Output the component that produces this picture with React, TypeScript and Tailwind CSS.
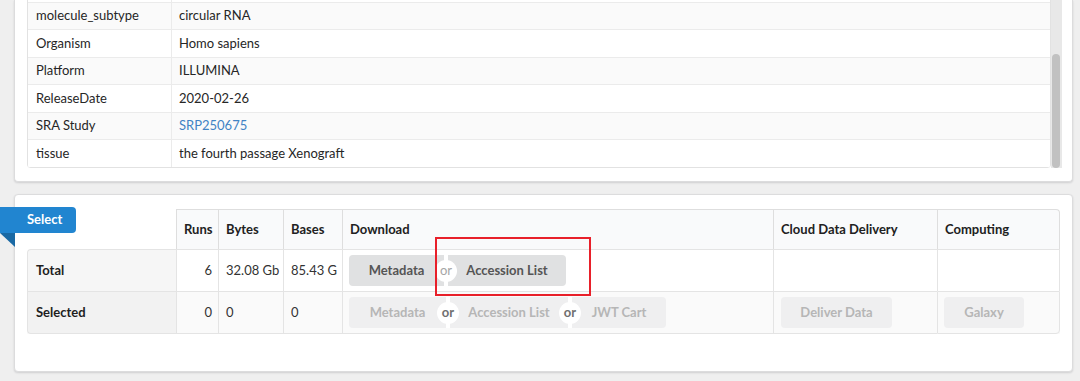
import React from 'react'

const FONT = "font-['Lato','Noto_Sans',sans-serif]"

const ATTRS: Array<{ label: string; value: string; link?: boolean }> = [
  { label: '', value: '' },
  { label: 'molecule_subtype', value: 'circular RNA' },
  { label: 'Organism', value: 'Homo sapiens' },
  { label: 'Platform', value: 'ILLUMINA' },
  { label: 'ReleaseDate', value: '2020-02-26' },
  { label: 'SRA Study', value: 'SRP250675', link: true },
  { label: 'tissue', value: 'the fourth passage Xenograft' },
]

const ROW_H = ['h-[28px]', 'h-[27px]', 'h-[28px]', 'h-[27px]', 'h-[28px]', 'h-[27px]', 'h-[28px]']

function Or({ strong }: { strong?: boolean }) {
  return (
    <div className="relative w-[4px] self-stretch bg-white z-10">
      <div
        className={`absolute left-1/2 top-1/2 -translate-x-1/2 -translate-y-1/2 w-[22px] h-[22px] rounded-full bg-white flex items-center justify-center text-[13px] leading-none ${
          strong ? 'text-[#707070] font-bold' : 'text-[#a5a5a5]'
        }`}
      >
        or
      </div>
    </div>
  )
}

function Btn({ label, w, disabled, rounded }: { label: string; w: string; disabled?: boolean; rounded: string }) {
  return (
    <div
      className={`${w} ${rounded} h-[31px] flex items-center justify-center text-[13px] font-bold ${
        disabled ? 'bg-[#efeff0] text-[#b6b6b6]' : 'bg-[#e0e1e2] text-[#555]'
      }`}
    >
      {label}
    </div>
  )
}

function AttributesCard() {
  return (
    <div className="ml-[14px] mr-[7px] bg-white border-x border-b border-[#dcdcdd] rounded-b-[4px] shadow-[0_1px_2px_0_rgba(34,36,38,0.15)] pl-[12px] pr-[10px] pb-[13px]">
      <div className="flex h-[168px]">
        <div className="flex-1 h-[168px] overflow-hidden">
          <div className="-mt-[25px] border-x border-[#e2e2e2] rounded-b-[4px] overflow-hidden">
            {ATTRS.map((a, i) => (
              <div
                key={i}
                className={`${ROW_H[i]} flex border-b border-[#ebebeb] ${i % 2 === 1 ? 'bg-[#fafafa]' : 'bg-white'} ${
                  i === ATTRS.length - 1 ? 'border-b-[#e2e2e2]' : ''
                }`}
              >
                <div className="w-[143px] flex items-center pl-[8px] text-[13px] text-[#262626]">{a.label}</div>
                <div
                  className={`flex-1 flex items-center pl-[7px] border-l border-[#ebebeb] text-[13px] ${
                    a.link ? 'text-[#4183c4]' : 'text-[#262626]'
                  }`}
                >
                  {a.value}
                </div>
              </div>
            ))}
          </div>
        </div>
        <div className="w-[11px] bg-[#e8e8e8] pt-[54px] px-[1px]">
          <div className="h-[114px] w-[8px] rounded-[4px] bg-[#c1c1c1]" />
        </div>
      </div>
    </div>
  )
}

const HEAD = 'border-l border-t border-[#dedede] bg-[#f9fafb] flex items-center pl-[7px] text-[13px] font-bold text-[#212121]'
const CELL = 'border-l border-t border-[#e4e4e4] flex items-center'

function SelectCard() {
  return (
    <div className="relative mt-[12px] ml-[14px] mr-[7px] h-[178px] bg-white border border-[#dcdcdd] rounded-[4px] shadow-[0_1px_2px_0_rgba(34,36,38,0.15)] pt-[14px] px-[12px]">
      <div className="absolute -left-[15px] top-[12px]">
        <div className="w-[76px] h-[26px] bg-[#2185d0] rounded-r-[4px] flex items-center pl-[27px] text-[13px] font-bold text-white">
          Select
        </div>
        <div className="w-0 h-0 border-t-[14px] border-t-[#1a69a4] border-l-[15px] border-l-transparent" />
      </div>

      <div className="flex h-[40px]">
        <div className="w-[149px]" />
        <div className={`${HEAD} w-[42px]`}>Runs</div>
        <div className={`${HEAD} w-[65px]`}>Bytes</div>
        <div className={`${HEAD} w-[59px]`}>Bases</div>
        <div className={`${HEAD} w-[431px]`}>Download</div>
        <div className={`${HEAD} w-[164px]`}>Cloud Data Delivery</div>
        <div className={`${HEAD} flex-1 border-r rounded-tr-[4px]`}>Computing</div>
      </div>

      <div className="flex h-[42px] bg-white">
        <div className={`${CELL} w-[149px] rounded-tl-[4px] bg-[#f6f6f6] pl-[8px] text-[13px] font-bold text-[#1e1e1e]`}>Total</div>
        <div className={`${CELL} w-[42px] justify-end pr-[6px] text-[13px] text-[#333]`}>6</div>
        <div className={`${CELL} w-[65px] pl-[7px] text-[13px] text-[#333]`}>32.08 Gb</div>
        <div className={`${CELL} w-[59px] pl-[7px] text-[13px] text-[#333]`}>85.43 G</div>
        <div className={`${CELL} w-[431px] pl-[6px]`}>
          <div className="flex">
            <Btn label="Metadata" w="w-[95px]" rounded="rounded-l-[4px]" />
            <Or />
            <Btn label="Accession List" w="w-[118px]" rounded="rounded-r-[4px]" />
          </div>
        </div>
        <div className={`${CELL} w-[164px]`} />
        <div className={`${CELL} flex-1 border-r`} />
      </div>

      <div className="flex h-[43px] bg-[#fafafa]">
        <div className={`${CELL} w-[149px] rounded-bl-[4px] border-b bg-[#f2f2f2] pl-[8px] text-[13px] font-bold text-[#1e1e1e]`}>Selected</div>
        <div className={`${CELL} w-[42px] border-b justify-end pr-[6px] text-[13px] text-[#333]`}>0</div>
        <div className={`${CELL} w-[65px] border-b pl-[7px] text-[13px] text-[#333]`}>0</div>
        <div className={`${CELL} w-[59px] border-b pl-[7px] text-[13px] text-[#333]`}>0</div>
        <div className={`${CELL} w-[431px] border-b pl-[6px]`}>
          <div className="flex">
            <Btn label="Metadata" w="w-[97px]" disabled rounded="rounded-l-[4px]" />
            <Or strong />
            <Btn label="Accession List" w="w-[118px]" disabled rounded="" />
            <Or strong />
            <Btn label="JWT Cart" w="w-[94px]" disabled rounded="rounded-r-[4px]" />
          </div>
        </div>
        <div className={`${CELL} w-[164px] border-b pl-[7px]`}>
          <Btn label="Deliver Data" w="w-[111px]" disabled rounded="rounded-[4px]" />
        </div>
        <div className={`${CELL} flex-1 border-b border-r rounded-br-[4px] pl-[6px]`}>
          <Btn label="Galaxy" w="w-[80px]" disabled rounded="rounded-[4px]" />
        </div>
      </div>
    </div>
  )
}

export default function App() {
  return (
    <div className={`relative w-[1080px] h-[381px] overflow-hidden bg-[#efefef] ${FONT}`}>
      <AttributesCard />
      <SelectCard />
      <div className="absolute left-[435px] top-[237px] w-[156px] h-[59px] border-2 border-[#e8202a] z-20" />
    </div>
  )
}
